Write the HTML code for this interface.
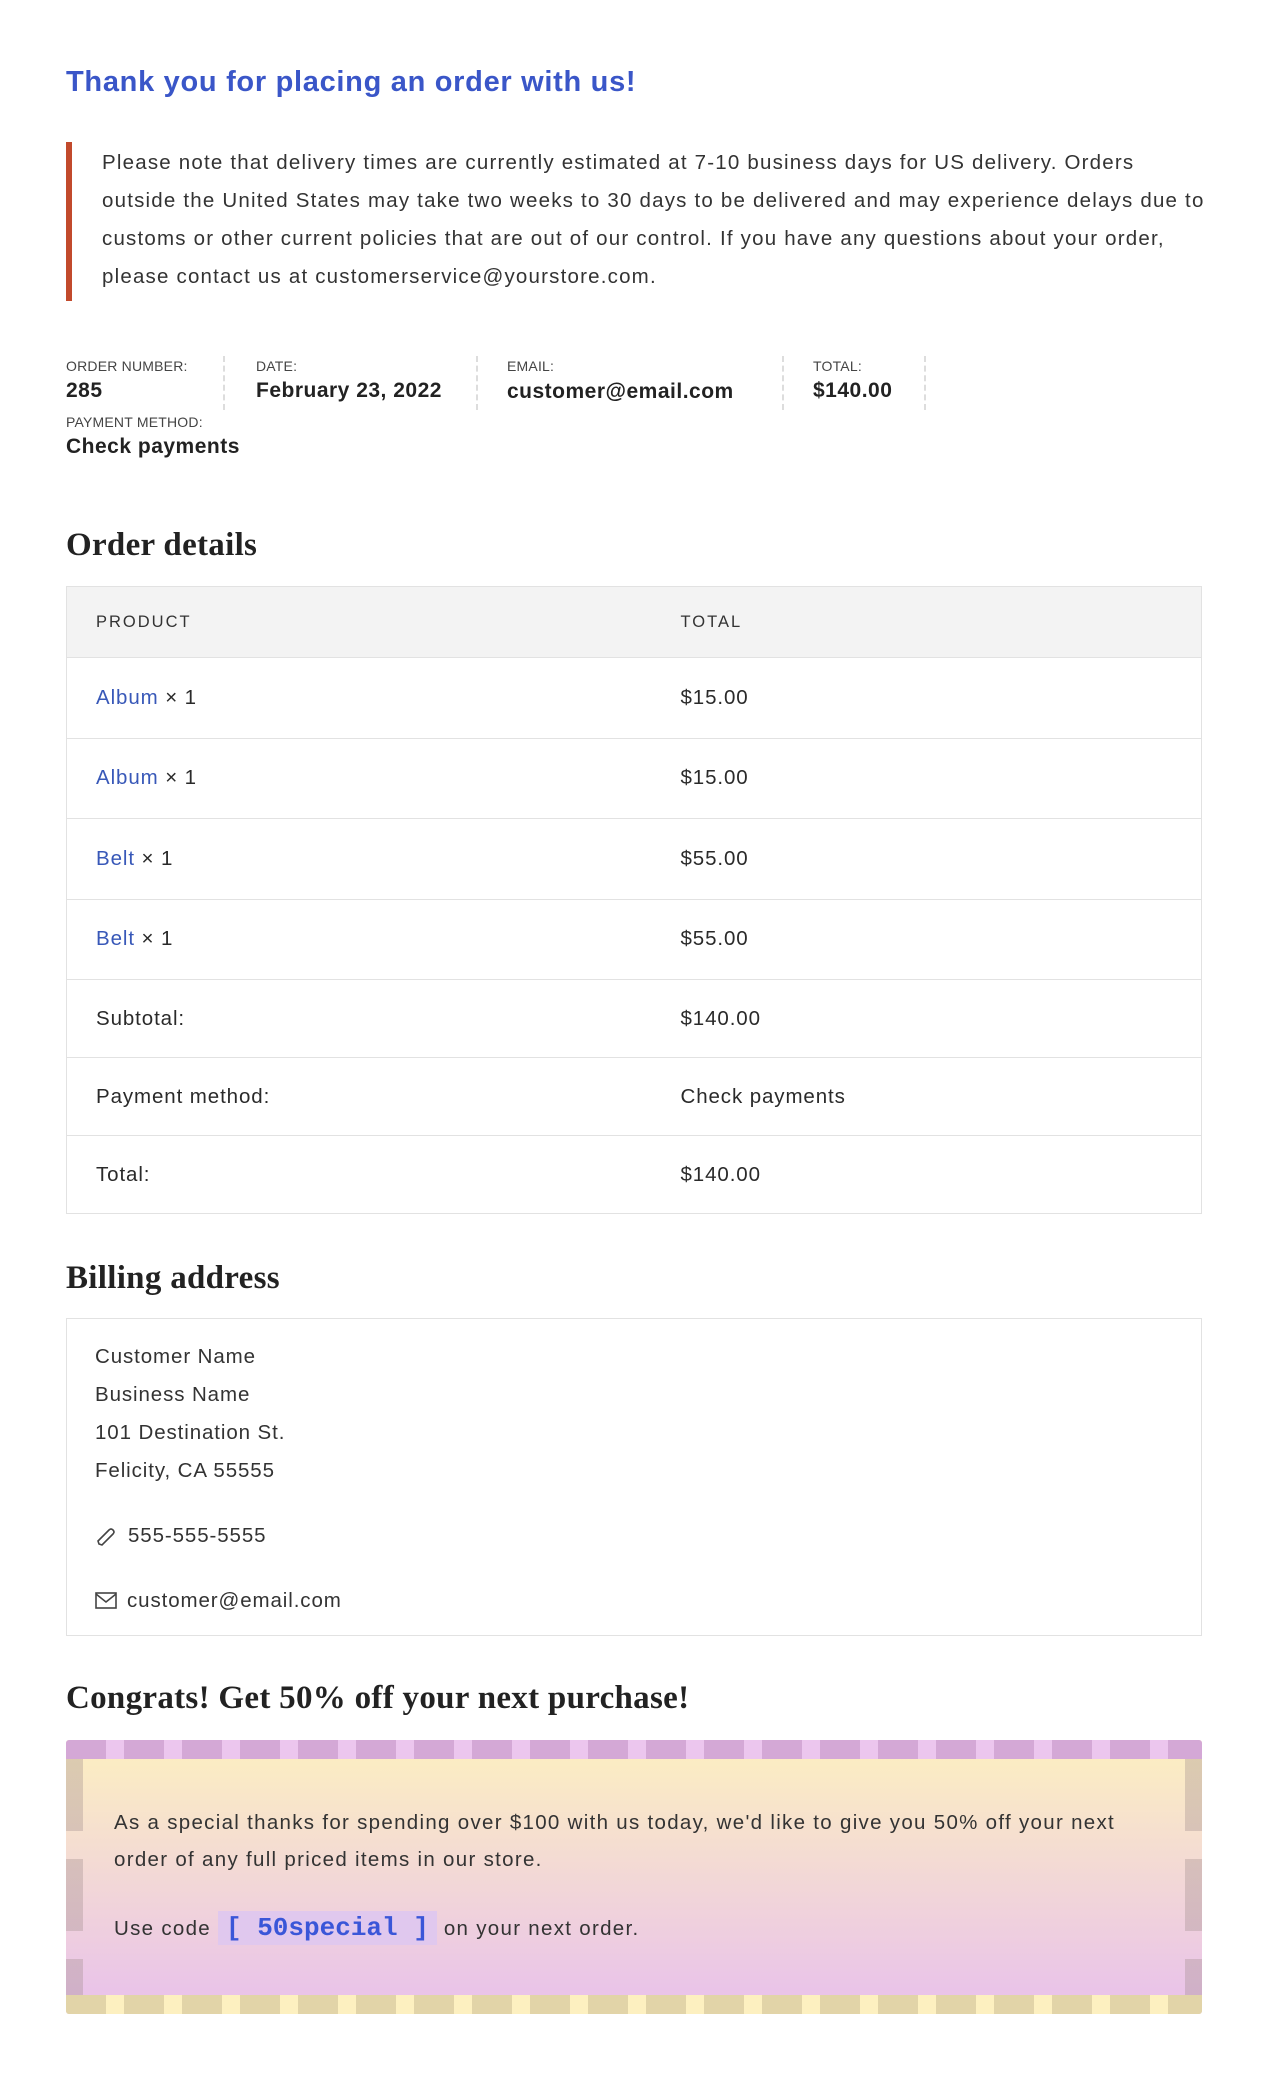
<!DOCTYPE html>
<html><head><meta charset="utf-8"><style>
*{box-sizing:border-box;margin:0;padding:0}
body{width:1272px;height:2080px;background:#fff;font-family:"Liberation Sans",sans-serif;color:#2a2a2a;position:relative;overflow:hidden;letter-spacing:0.9px}
.a{position:absolute}
h1{position:absolute;left:66px;top:66px;font-size:29px;color:#3a56c8;font-weight:bold;letter-spacing:0.7px}
.bq{position:absolute;left:66px;top:142px;width:6px;height:159px;background:#c24a2c}
.bqt{position:absolute;left:102px;top:144px;width:1160px;font-size:20.5px;line-height:38px;color:#333;letter-spacing:1.2px;white-space:nowrap}
.lab{font-size:14px;color:#444;text-transform:uppercase;letter-spacing:0.2px}
.val{font-size:21px;font-weight:bold;color:#222;margin-top:6px;letter-spacing:0.5px}
.div{position:absolute;top:356px;height:54px;border-left:2px dashed #ddd}
h2{position:absolute;left:66px;font-family:"Liberation Serif",serif;font-size:33px;font-weight:bold;color:#222;letter-spacing:0.3px}
table{position:absolute;left:66px;top:586px;width:1136px;border-collapse:collapse;border:1.5px solid #e2e2e2;font-size:20.5px}
td,th{border-bottom:1.5px solid #e2e2e2;text-align:left;padding-left:29px;vertical-align:middle}
th{background:#f3f3f3;height:71px;font-size:16.5px;font-weight:normal;letter-spacing:2px;color:#333}
td.c2,th.c2{padding-left:0;width:521px}
tr.p td{height:80.5px}
tr.s td{height:78px}
a{color:#3858b8;text-decoration:none}
.box{position:absolute;left:66px;top:1318px;width:1136px;height:318px;border:1.5px solid #e2e2e2}
.bl{position:absolute;left:95px;font-size:20.5px;color:#333}
.cp{position:absolute;left:66px;top:1740px;width:1136px;height:274px;background:linear-gradient(#fdf0c0,#e8c0ec);border-radius:3px;overflow:hidden}
.top{position:absolute;left:0;top:0;right:0;height:19px;background:repeating-linear-gradient(90deg,#d4a8d6 0 40px,#ecc6ee 40px 58px)}
.bot{position:absolute;left:0;bottom:0;right:0;height:19px;background:repeating-linear-gradient(90deg,#e2d4a8 0 40px,#fdf0c0 40px 58px)}
.sd{position:absolute;top:19px;bottom:19px;width:17px;background:repeating-linear-gradient(180deg,rgba(160,140,140,.35) 0 72px,transparent 72px 100px)}
.ct{position:absolute;left:48px;font-size:20.5px;color:#333;line-height:37px;width:1040px;letter-spacing:1.3px}
code{font-family:"Liberation Mono",monospace;font-weight:bold;color:#3a56d8;background:#e0c8ee;font-size:26px;padding:2px 8px;letter-spacing:0}
</style></head><body>
<h1>Thank you for placing an order with us!</h1>
<div class="bq"></div>
<div class="bqt">Please note that delivery times are currently estimated at 7-10 business days for US delivery. Orders<br>outside the United States may take two weeks to 30 days to be delivered and may experience delays due to<br>customs or other current policies that are out of our control. If you have any questions about your order,<br>please contact us at customerservice@yourstore.com.</div>

<div class="a" style="left:66px;top:358px"><div class="lab">Order number:</div><div class="val" style="margin-top:5px">285</div></div>
<div class="div" style="left:223px"></div>
<div class="a" style="left:256px;top:358px"><div class="lab">Date:</div><div class="val" style="margin-top:5px">February 23, 2022</div></div>
<div class="div" style="left:476px"></div>
<div class="a" style="left:507px;top:358px"><div class="lab">Email:</div><div class="val" style="margin-top:6px">customer@email.com</div></div>
<div class="div" style="left:782px"></div>
<div class="a" style="left:813px;top:358px"><div class="lab">Total:</div><div class="val" style="margin-top:5px">$140.00</div></div>
<div class="div" style="left:924px"></div>
<div class="a" style="left:66px;top:414px"><div class="lab">Payment method:</div><div class="val" style="margin-top:5px">Check payments</div></div>

<h2 style="top:527px">Order details</h2>
<table>
<tr><th>PRODUCT</th><th class="c2">TOTAL</th></tr>
<tr class="p"><td><a>Album</a> × 1</td><td class="c2">$15.00</td></tr>
<tr class="p"><td><a>Album</a> × 1</td><td class="c2">$15.00</td></tr>
<tr class="p"><td><a>Belt</a> × 1</td><td class="c2">$55.00</td></tr>
<tr class="p"><td><a>Belt</a> × 1</td><td class="c2">$55.00</td></tr>
<tr class="s"><td>Subtotal:</td><td class="c2">$140.00</td></tr>
<tr class="s"><td>Payment method:</td><td class="c2">Check payments</td></tr>
<tr class="s"><td>Total:</td><td class="c2">$140.00</td></tr>
</table>

<h2 style="top:1260px">Billing address</h2>
<div class="box"></div>
<div class="bl" style="top:1345px">Customer Name</div>
<div class="bl" style="top:1383px">Business Name</div>
<div class="bl" style="top:1421px">101 Destination St.</div>
<div class="bl" style="top:1459px">Felicity, CA 55555</div>
<svg class="a" style="left:95px;top:1526px" width="22" height="22" viewBox="0 0 22 22" fill="none" stroke="#444" stroke-width="1.6"><path d="M4 18 L3 15 L14 4 Q16 2 18 4 Q20 6 18 8 L7 19 Z"/></svg>
<div class="bl" style="top:1524px;left:128px">555-555-5555</div>
<svg class="a" style="left:95px;top:1592px" width="22" height="18" viewBox="0 0 22 18" fill="none" stroke="#444" stroke-width="1.6"><rect x="1" y="1" width="20" height="15"/><path d="M1 2 L11 10 L21 2"/></svg>
<div class="bl" style="top:1589px;left:127px">customer@email.com</div>

<h2 style="top:1680px">Congrats! Get 50% off your next purchase!</h2>
<div class="cp">
<div class="top"></div><div class="bot"></div>
<div class="sd" style="left:0"></div><div class="sd" style="right:0"></div>
<div class="ct" style="top:64px">As a special thanks for spending over $100 with us today, we'd like to give you 50% off your next order of any full priced items in our store.</div>
<div class="ct" style="top:170px">Use code <code>[ 50special ]</code> on your next order.</div>
</div>
</body></html>
